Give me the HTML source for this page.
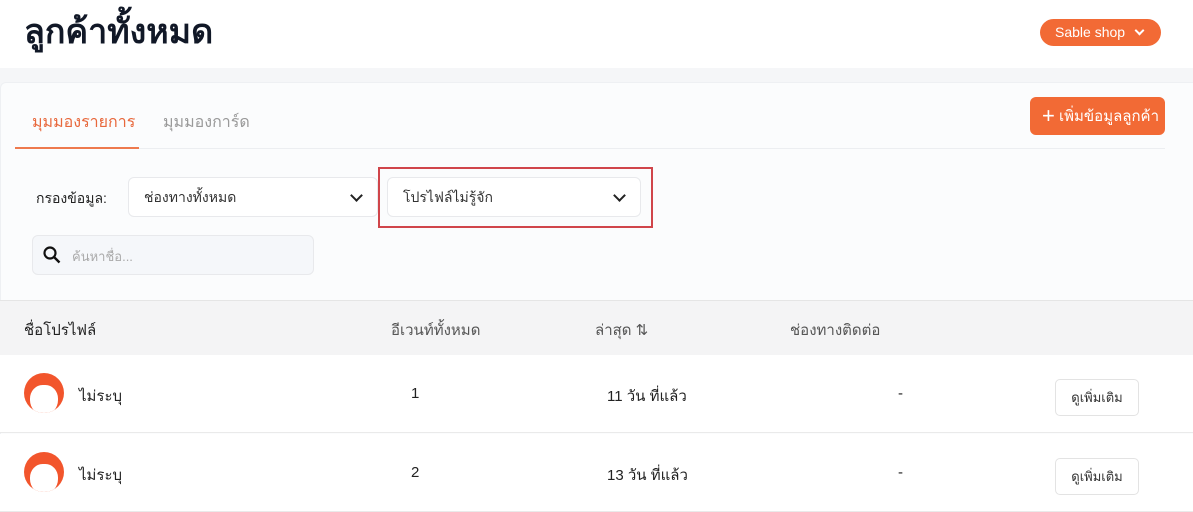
<!DOCTYPE html>
<html><head><meta charset="utf-8"><style>
*{box-sizing:border-box;margin:0;padding:0}
body{width:1193px;height:512px;overflow:hidden;background:#f5f6f8;font-family:"Liberation Sans","DejaVu Sans",sans-serif;color:#222;position:relative}
.abs{position:absolute}
.top{left:0;top:0;width:1193px;height:68px;background:#fff}
h1{position:absolute;left:24px;top:4px;font-size:34px;font-weight:bold;color:#111827}
.shop{left:1040px;top:19px;width:121px;height:27px;border-radius:14px;background:#f26a35;color:#fff;font-size:14px;line-height:27px;padding-left:15px}
.card{left:0;top:82px;width:1193px;height:430px;background:#fbfcfd;border-top:1px solid #eef0f3;border-left:1px solid #eef0f3;border-radius:6px 0 0 0}
.tab{font-size:16px;top:110px}
.btn{left:1030px;top:97px;width:135px;height:38px;border-radius:6px;background:#f26a35;color:#fff;font-size:15px;line-height:38px;padding-left:12px}
.sel{height:40px;border:1px solid #e8e9ec;border-radius:6px;background:#fff;font-size:14px;line-height:38px;padding-left:15px;color:#333}
.chev{position:absolute;right:16px;top:13px;width:9px;height:9px;border-right:2px solid #222;border-bottom:2px solid #222;transform:rotate(45deg)}
.th{top:300px;left:0;width:1193px;height:55px;background:#f4f4f5;border-top:1px solid #e5e5e5}
.row{left:0;width:1193px;height:78px;background:#fff;border-bottom:1px solid #eaeaea}
.more{width:84px;height:37px;border:1px solid #e3e3e3;border-radius:5px;background:#fff;font-size:13px;line-height:35px;text-align:center;color:#333}
.av{width:40px;height:40px;border-radius:50%;background:#f2552c;overflow:hidden}
</style></head><body>
<div class="abs top"></div>
<h1>ลูกค้าทั้งหมด</h1>
<div class="abs shop">Sable shop<span style="position:absolute;left:96px;top:8px;width:7px;height:7px;border-right:2px solid #fff;border-bottom:2px solid #fff;transform:rotate(45deg)"></span></div>
<div class="abs card"></div>
<div class="abs tab" style="left:32px;color:#e8683c">มุมมองรายการ</div>
<div class="abs" style="left:15px;top:147px;width:124px;height:2px;background:#ee7a4e"></div>
<div class="abs" style="left:139px;top:148px;width:1026px;height:1px;background:#eceef1"></div>
<div class="abs tab" style="left:163px;color:#999">มุมมองการ์ด</div>
<div class="abs btn"><span style="font-size:22px;vertical-align:-2px">+</span> เพิ่มข้อมูลลูกค้า</div>
<div class="abs" style="left:36px;top:188px;font-size:14px">กรองข้อมูล:</div>
<div class="abs sel" style="left:128px;top:177px;width:250px">ช่องทางทั้งหมด<span class="chev"></span></div>
<div class="abs" style="left:378px;top:167px;width:275px;height:61px;border:2px solid #d0454a"></div>
<div class="abs sel" style="left:387px;top:177px;width:254px">โปรไฟล์ไม่รู้จัก<span class="chev"></span></div>
<div class="abs" style="left:32px;top:235px;width:282px;height:40px;border:1px solid #e8e9ec;border-radius:6px;background:#f5f7fa"></div>
<svg class="abs" style="left:43px;top:246px" width="18" height="18" viewBox="0 0 18 18"><circle cx="7" cy="7" r="5.5" fill="none" stroke="#111" stroke-width="2.2"/><path d="M11 11l5.5 5.5" stroke="#111" stroke-width="2.4"/></svg>
<div class="abs" style="left:72px;top:246px;font-size:13px;color:#aaa">ค้นหาชื่อ...</div>
<div class="abs th"></div>
<div class="abs" style="left:24px;top:318px;font-size:15px">ชื่อโปรไฟล์</div>
<div class="abs" style="left:391px;top:318px;font-size:15px;color:#555">อีเวนท์ทั้งหมด</div>
<div class="abs" style="left:595px;top:318px;font-size:15px;color:#555">ล่าสุด ⇅</div>
<div class="abs" style="left:790px;top:318px;font-size:15px;color:#555">ช่องทางติดต่อ</div>
<div class="abs row" style="top:355px"></div>
<div class="abs row" style="top:434px"></div>
<div class="abs av" style="left:24px;top:373px"><div style="margin:12px 0 0 6px;width:28px;height:30px;background:#fff;border-radius:45% 45% 50% 50%"></div></div>
<div class="abs av" style="left:24px;top:452px"><div style="margin:12px 0 0 6px;width:28px;height:30px;background:#fff;border-radius:45% 45% 50% 50%"></div></div>
<div class="abs" style="left:79px;top:384px;font-size:15px">ไม่ระบุ</div>
<div class="abs" style="left:79px;top:463px;font-size:15px">ไม่ระบุ</div>
<div class="abs" style="left:411px;top:385px;font-size:15px">1</div>
<div class="abs" style="left:411px;top:464px;font-size:15px">2</div>
<div class="abs" style="left:607px;top:384px;font-size:15px">11 วัน ที่แล้ว</div>
<div class="abs" style="left:607px;top:463px;font-size:15px">13 วัน ที่แล้ว</div>
<div class="abs" style="left:898px;top:385px;font-size:15px">-</div>
<div class="abs" style="left:898px;top:464px;font-size:15px">-</div>
<div class="abs more" style="left:1055px;top:379px">ดูเพิ่มเติม</div>
<div class="abs more" style="left:1055px;top:458px">ดูเพิ่มเติม</div>
</body></html>
